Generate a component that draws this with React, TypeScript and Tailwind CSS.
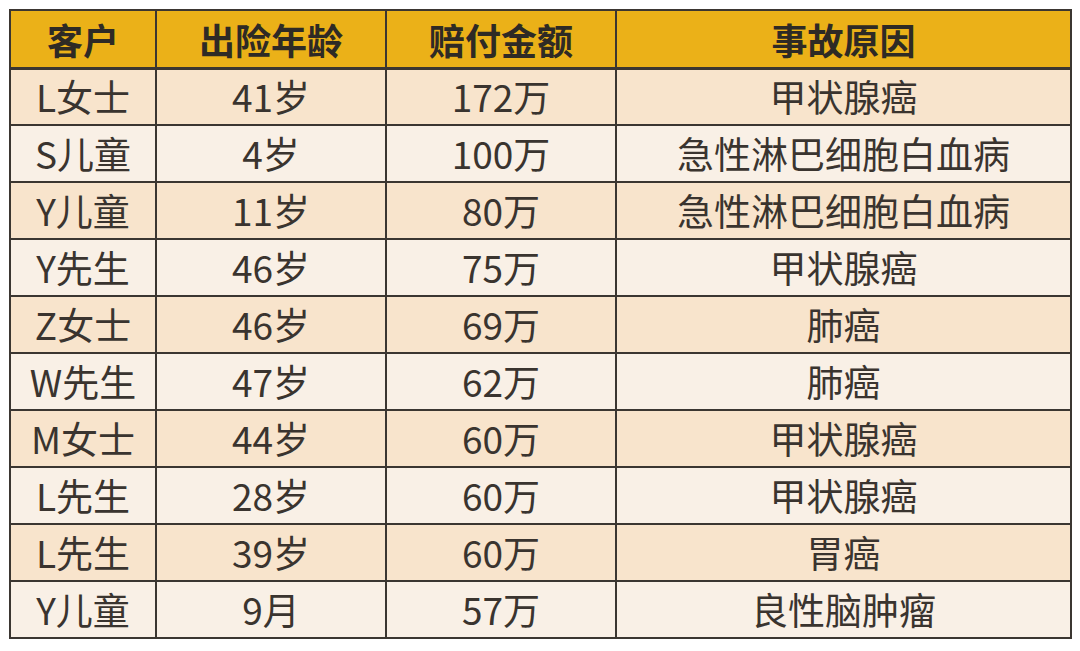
import React from "react";

const rows: [string, string, string, string][] = [
  ["L女士", "41岁", "172万", "甲状腺癌"],
  ["S儿童", "4岁", "100万", "急性淋巴细胞白血病"],
  ["Y儿童", "11岁", "80万", "急性淋巴细胞白血病"],
  ["Y先生", "46岁", "75万", "甲状腺癌"],
  ["Z女士", "46岁", "69万", "肺癌"],
  ["W先生", "47岁", "62万", "肺癌"],
  ["M女士", "44岁", "60万", "甲状腺癌"],
  ["L先生", "28岁", "60万", "甲状腺癌"],
  ["L先生", "39岁", "60万", "胃癌"],
  ["Y儿童", "9月", "57万", "良性脑肿瘤"],
];

export default function App() {
  return (
    <div
      className="w-[1080px] h-[651px] bg-white pt-[9px] pl-[9px]"
      style={{ fontFamily: '"Noto Sans CJK SC", "Noto Sans", sans-serif' }}
    >
      <table className="border-collapse w-[1061px] table-fixed text-[#3a342f]">
        <colgroup>
          <col className="w-[146px]" />
          <col className="w-[230px]" />
          <col className="w-[230px]" />
          <col className="w-[455px]" />
        </colgroup>
        <thead>
          <tr className="bg-[#ebb118] h-[58px]">
            {["客户", "出险年龄", "赔付金额", "事故原因"].map((h) => (
              <th
                key={h}
                className="border-2 border-b-[3px] border-[#3b3631] text-[36px] font-bold leading-none text-center p-0 text-[#2e2a25]"
              >
                {h}
              </th>
            ))}
          </tr>
        </thead>
        <tbody>
          {rows.map((r, i) => (
            <tr
              key={i}
              className={`h-[57px] ${i % 2 === 0 ? "bg-[#f8e4cc]" : "bg-[#f9f0e6]"}`}
            >
              {r.map((c, j) => (
                <td
                  key={j}
                  className="border-2 border-[#3b3631] text-[37px] leading-none text-center p-0"
                >
                  {c}
                </td>
              ))}
            </tr>
          ))}
        </tbody>
      </table>
    </div>
  );
}
